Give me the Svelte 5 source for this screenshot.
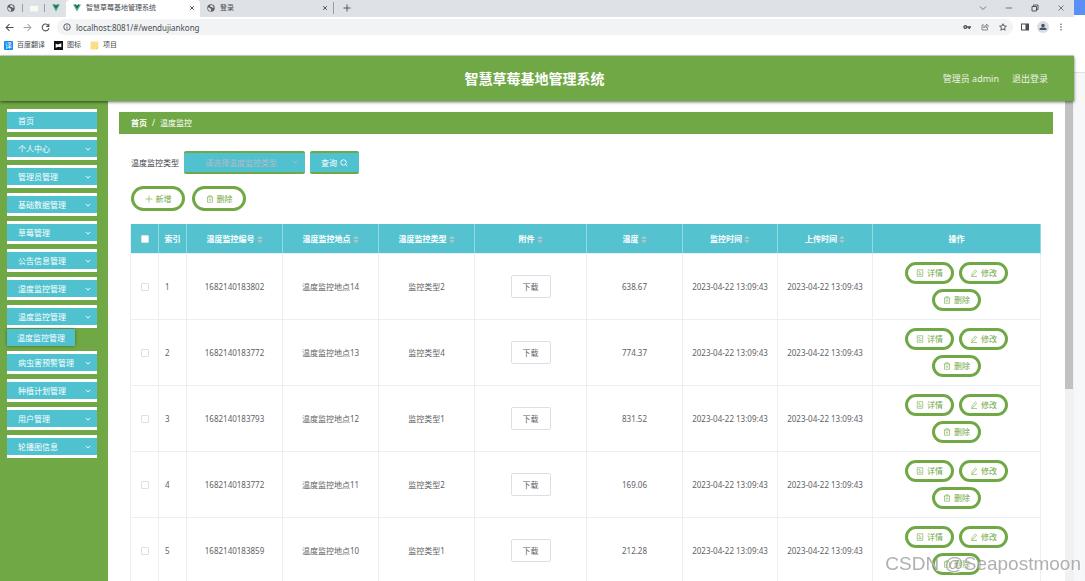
<script lang="ts">
  type Row = { id: string; place: string; type: string; temp: string };

  const menu = [
    { name: "首页", leaf: true },
    { name: "个人中心" },
    { name: "管理员管理" },
    { name: "基础数据管理" },
    { name: "草莓管理" },
    { name: "公告信息管理" },
    { name: "湿度监控管理" },
    { name: "温度监控管理", child: "温度监控管理" },
    { name: "病虫害预警管理" },
    { name: "种植计划管理" },
    { name: "用户管理" },
    { name: "轮播图信息" },
  ];

  const columns = [
    "温度监控编号",
    "温度监控地点",
    "温度监控类型",
    "附件",
    "温度",
    "监控时间",
    "上传时间",
  ];

  const rows: Row[] = [
    { id: "1682140183802", place: "温度监控地点14", type: "监控类型2", temp: "638.67" },
    { id: "1682140183772", place: "温度监控地点13", type: "监控类型4", temp: "774.37" },
    { id: "1682140183793", place: "温度监控地点12", type: "监控类型1", temp: "831.52" },
    { id: "1682140183772", place: "温度监控地点11", type: "监控类型2", temp: "169.06" },
    { id: "1682140183859", place: "温度监控地点10", type: "监控类型1", temp: "212.28" },
  ];
  const time = "2023-04-22 13:09:43";

  let url = $state("localhost:8081/#/wendujiankong");
  let selectedType = $state("");

  // stroked icons, 16x16 grid
  const icons: Record<string, string> = {
    back: "M15 8H2M8 2 2 8l6 6",
    forward: "M1 8h13M8 2l6 6-6 6",
    reload: "M13 4.500A6 6 0 1 0 14 9M14 1.500V6H9.500",
    info: "M8 1.500a6.500 6.500 0 1 0 0 13a6.500 6.500 0 1 0 0-13M8 7v4.500M8 4.300v1.400",
    close: "M3 3l10 10M13 3 3 13",
    plus: "M8 1v14M1 8h14",
    down: "M2 5l6 6 6-6",
    minus: "M1.500 8h13",
    restore: "M2 5h9v9H2zM5 5V2h9v9h-3",
    share: "M6 4H2v10h11v-4M5 10c.5-3.500 3-5 6-5V2l4 4-4 4V7.500C8.500 7.500 6.500 8 5 10z",
    star: "M8 1.500l2 4.500 4.800.4-3.700 3.200 1.200 4.800L8 11.800l-4.300 2.600 1.200-4.800L1.200 6.400 6 6z",
    search: "M7 1.500a5.500 5.500 0 1 0 0 11a5.500 5.500 0 1 0 0-11M11 11l3.500 3.500",
    trash: "M1.500 4h13M5.500 4V1.500h5V4M3 4v10.500h10V4M6.500 7v4.500M9.500 7v4.500",
    detail: "M2.500 1.500h11v13h-11zM5 5h3M5 8h6M5 11h6",
    edit: "M4 9.500 10.500 2l2.800 2.300L7 12l-3.500 1zM2 15h12",
  };
</script>

{#snippet icon(name: string, cls = "")}
  <svg class="icon {cls}" viewBox="0 0 16 16" aria-hidden="true"><path d={icons[name]} /></svg>
{/snippet}

{#snippet globe()}
  <svg class="fav" viewBox="0 0 16 16" aria-hidden="true">
    <circle cx="8" cy="8" r="7.500" fill="#5f6368" />
    <path d="M2 7l4 1 2 2v3l-1 1.500C4 14 1.500 11 2 7zM8 2c3 0 5 2 5.500 5l-2 1-1.500-2H7l-1-2z" fill="#dee1e6" />
  </svg>
{/snippet}

{#snippet vue()}
  <svg class="fav" viewBox="0 0 16 16" aria-hidden="true">
    <path d="M0 1h6l2 3.500L10 1h6L8 15z" fill="#41b883" />
    <path d="M3.200 1H6l2 3.500L10 1h2.800L8 9.500z" fill="#35495e" />
  </svg>
{/snippet}

<div class="desktop">
  <div class="browser">
    <div class="tabs">
      <div class="pinned">{@render globe()}</div>
      <div class="pinned line">
        <svg class="fav" viewBox="0 0 16 16" aria-hidden="true">
          <path d="M0 1h16v14H0z" fill="#f7faf6" /><path d="M0 1h16v2H0z" fill="#bfe0c4" />
        </svg>
      </div>
      <div class="pinned line">{@render vue()}</div>
      <div class="tab active">
        {@render vue()}
        <span>智慧草莓基地管理系统</span>
        <button aria-label="关闭标签">{@render icon("close", "tiny")}</button>
      </div>
      <div class="tab">
        {@render globe()}
        <span>登录</span>
        <button aria-label="关闭标签">{@render icon("close", "tiny")}</button>
      </div>
      <button class="new" aria-label="新标签">{@render icon("plus")}</button>
      <div class="window">
        <button aria-label="搜索标签">{@render icon("down", "thin")}</button>
        <button aria-label="最小化">{@render icon("minus", "thin")}</button>
        <button aria-label="还原">{@render icon("restore")}</button>
        <button aria-label="关闭">{@render icon("close", "thin")}</button>
      </div>
    </div>

    <div class="toolbar">
      <button aria-label="后退">{@render icon("back", "nav")}</button>
      <button class="off" aria-label="前进">{@render icon("forward", "nav")}</button>
      <button aria-label="刷新">{@render icon("reload", "nav")}</button>
      <div class="address">
        {@render icon("info")}
        <input aria-label="地址" bind:value={url} />
        <button aria-label="密码">
          <svg class="fav" viewBox="0 0 16 16" aria-hidden="true">
            <path fill-rule="evenodd" d="M4.500 4a4 4 0 1 0 3.800 5.300H11V12h3V9.300h2V6.700H8.300A4 4 0 0 0 4.500 4zm0 2.500a1.500 1.500 0 1 1 0 3a1.500 1.500 0 0 1 0-3z" fill="#4a4d51" />
          </svg>
        </button>
        <button class="share" aria-label="分享">{@render icon("share")}</button>
        <button aria-label="收藏">{@render icon("star")}</button>
      </div>
      <button aria-label="侧边栏">
        <svg class="fav" viewBox="0 0 16 16" aria-hidden="true">
          <path d="M0 1h16v14H0zM2 3v10h7V3z" fill="#4a4d51" fill-rule="evenodd" />
        </svg>
      </button>
      <button class="avatar" aria-label="用户">
        <svg class="fav" viewBox="0 0 16 16" aria-hidden="true">
          <circle cx="8" cy="5" r="3.500" fill="#46536a" /><path d="M1 14v-2c0-4 14-4 14 0v2z" fill="#46536a" />
        </svg>
      </button>
      <button aria-label="菜单">
        <svg class="fav" viewBox="0 0 16 16" aria-hidden="true">
          <g fill="#4a4d51"><circle cx="8" cy="2.500" r="1.500" /><circle cx="8" cy="8" r="1.500" /><circle cx="8" cy="13.500" r="1.500" /></g>
        </svg>
      </button>
    </div>

    <div class="bookmarks">
      <a href="#fanyi"><i class="yi">译</i>百度翻译</a>
      <a href="#tubiao">
        <svg class="mark" viewBox="0 0 16 16" aria-hidden="true">
          <path d="M0 0h16v16H0z" fill="#111" /><path d="M3 5l4 1 6-2v7l-5-1-5 2z" fill="#fff" />
        </svg>图标
      </a>
      <a href="#xiangmu">
        <svg class="mark" viewBox="0 0 16 16" aria-hidden="true">
          <path d="M1 1h14v11l-3 3H1z" fill="#fbdf85" /><path d="M15 12l-3 3v-3z" fill="#e8c04f" />
        </svg>项目
      </a>
    </div>

    <header>
      <h1>智慧草莓基地管理系统</h1>
      <div class="user">
        <span>管理员 admin</span>
        <a href="#logout">退出登录</a>
      </div>
    </header>

    <div class="page">
      <nav>
        {#each menu as item}
          <a class="item" href="#menu">
            {item.name}
            {#if !item.leaf}{@render icon("down", "tiny")}{/if}
          </a>
          {#if item.child}
            <a class="child" href="#wendujiankong">{item.child}</a>
          {/if}
        {/each}
      </nav>

      <main>
        <div class="crumb">
          <a href="#home">首页</a><span>/</span><span>温度监控</span>
        </div>

        <div class="content">
          <form class="search">
            <label for="type">温度监控类型</label>
            <div class="select">
              <select id="type" bind:value={selectedType}>
                <option value="">请选择温度监控类型</option>
              </select>
              {@render icon("down", "tiny")}
            </div>
            <button type="button">查询 {@render icon("search")}</button>
          </form>

          <div class="actions">
            <button class="pill big">{@render icon("plus")}新增</button>
            <button class="pill big">{@render icon("trash")}删除</button>
          </div>

          <table>
            <colgroup>
              <col class="w-s" /><col class="w-s" />
              <col class="w-m" /><col class="w-m" /><col class="w-m" />
              <col class="w-l" />
              <col class="w-m" /><col class="w-t" /><col class="w-t" />
              <col />
            </colgroup>
            <thead>
              <tr>
                <th><input type="checkbox" aria-label="全选" /></th>
                <th>索引</th>
                {#each columns as col}
                  <th>
                    {col}
                    <svg class="sort" viewBox="0 0 8 10" aria-hidden="true"><path d="M4 0l4 4H0zM0 6h8l-4 4z" /></svg>
                  </th>
                {/each}
                <th>操作</th>
              </tr>
            </thead>
            <tbody>
              {#each rows as row, i}
                <tr>
                  <td><input type="checkbox" aria-label="选择第{i + 1}行" /></td>
                  <td class="index">{i + 1}</td>
                  <td>{row.id}</td>
                  <td>{row.place}</td>
                  <td>{row.type}</td>
                  <td><button class="download">下载</button></td>
                  <td>{row.temp}</td>
                  <td>{time}</td>
                  <td>{time}</td>
                  <td>
                    <div class="ops">
                      <button class="pill">{@render icon("detail")}详情</button>
                      <button class="pill">{@render icon("edit")}修改</button>
                      <button class="pill">{@render icon("trash")}删除</button>
                    </div>
                  </td>
                </tr>
              {/each}
            </tbody>
          </table>
        </div>
      </main>
      <div class="scroll"><div class="thumb"></div></div>
    </div>
  </div>

  <div class="behind"></div>
  <div class="watermark">CSDN @Seapostmoon</div>
</div>

<style>
  :global(body) {
    background: #fff;
    overflow: hidden;
  }

  .desktop {
    display: flex;
    height: 100vh;
    font: 8px/12px "Noto Sans", "Noto Sans CJK SC", sans-serif;
    color: #606266;
  }

  .desktop *,
  .desktop *::before {
    box-sizing: border-box;
  }

  button,
  input,
  select {
    font: inherit;
    color: inherit;
    border: 0;
    padding: 0;
    margin: 0;
    background: none;
  }

  a {
    color: inherit;
    text-decoration: none;
  }

  .icon {
    width: 8px;
    height: 8px;
    flex: none;
    fill: none;
    stroke: currentColor;
    stroke-width: 1.8;
  }

  .tiny {
    width: 6px;
    height: 6px;
    stroke-width: 2.4;
  }

  .thin {
    stroke-width: 1.4;
  }

  .nav {
    width: 9px;
    height: 9px;
  }

  .fav {
    width: 8px;
    height: 8px;
    flex: none;
  }

  .browser {
    flex: 1;
    min-width: 0;
    display: flex;
    flex-direction: column;
  }

  /* Browser window */
  .tabs {
    display: flex;
    flex: none;
    height: 17px;
    padding-bottom: 2px;
    align-items: center;
    background: #dee1e6;
    color: #45494d;
    font-size: 7px;
  }

  .tabs button,
  .toolbar button {
    display: flex;
    align-items: center;
    justify-content: center;
  }

  .pinned {
    display: flex;
    justify-content: center;
    width: 22px;
  }

  .line {
    border-left: 1px solid #9a9da2;
  }

  .tab {
    display: flex;
    align-items: center;
    gap: 5px;
    width: 134px;
    padding: 0 5px 0 7px;
    border-right: 1px solid #9a9da2;
  }

  .tab span {
    flex: 1;
  }

  .tab.active {
    height: 17px;
    margin-bottom: -2px;
    padding-bottom: 2px;
    border: 0;
    border-radius: 4px 4px 0 0;
    background: #fff;
  }

  .new {
    width: 26px;
  }

  .window {
    display: flex;
    margin-left: auto;
  }

  .window button {
    width: 26px;
  }

  .toolbar {
    display: flex;
    flex: none;
    align-items: center;
    height: 20px;
    background: #fff;
    color: #4a4d51;
  }

  .toolbar button {
    width: 18px;
  }

  .toolbar .off {
    color: #a0a3a6;
  }

  .toolbar .share {
    color: #7b7e82;
  }

  .address {
    display: flex;
    flex: 1;
    align-items: center;
    height: 16px;
    margin: 0 3px;
    padding: 0 1px 0 6px;
    border-radius: 8px;
    background: #f1f3f4;
  }

  .address input {
    flex: 1;
    height: 14px;
    margin-left: 5px;
  }

  .avatar::before {
    content: "";
    position: absolute;
    z-index: 0;
    width: 12px;
    height: 12px;
    border-radius: 50%;
    background: #dadde3;
  }

  .avatar svg {
    position: relative;
  }

  .toolbar > button:last-child {
    margin-right: 4px;
  }

  .bookmarks {
    display: flex;
    flex: none;
    gap: 9px;
    height: 19px;
    padding: 0 4px 2px;
    align-items: center;
    background: #fff;
    border-bottom: 1px solid #d5dad2;
    color: #45494d;
    font-size: 7px;
  }

  .bookmarks a {
    display: flex;
    align-items: center;
    gap: 4px;
  }

  .yi {
    width: 9px;
    height: 9px;
    border-radius: 1px;
    background: #118bee;
    color: #fff;
    font-style: normal;
    line-height: 9px;
    text-align: center;
  }

  .mark {
    width: 9px;
    height: 9px;
  }

  /* Page header */
  header {
    display: grid;
    grid-template-columns: 1fr auto 1fr;
    flex: none;
    align-items: center;
    height: 45px;
    padding-right: 5px;
    z-index: 1;
    background: #70a846;
    box-shadow: 0 1px 3px rgba(0, 0, 0, 0.6);
    color: #fff;
  }

  h1 {
    grid-column: 2;
    margin: 0;
    font-size: 14px;
    line-height: 20px;
  }

  .user {
    display: flex;
    justify-content: flex-end;
    gap: 13px;
    padding-right: 21px;
    color: #edf4e7;
    font-size: 9px;
  }

  .page {
    display: flex;
    flex: 1;
    min-height: 0;
    overflow: hidden;
  }

  /* Side menu */
  nav {
    flex: none;
    width: 108px;
    padding: 8px 11px 0 7px;
    background: #70a846;
    color: #fff;
  }

  .item {
    display: flex;
    align-items: center;
    justify-content: space-between;
    height: 23px;
    margin-bottom: 5px;
    padding: 0 6px 0 11px;
    border: solid #fff;
    border-width: 3px 0;
    background: #4fc1cf;
  }

  .child {
    display: block;
    width: 68px;
    height: 17px;
    margin: -4px 0 5px;
    padding-left: 10px;
    background: #4fc1cf;
    box-shadow: 0 0 3px rgba(0, 0, 0, 0.4);
    line-height: 17px;
  }

  main {
    flex: 1;
    min-width: 0;
    padding: 11px 12px 0 11px;
    background: #fff;
  }

  .crumb {
    display: flex;
    gap: 5px;
    height: 22px;
    padding: 0 12px;
    align-items: center;
    background: #70a846;
    color: #fff;
  }

  .crumb a {
    font-weight: bold;
  }

  .content {
    padding: 17px 12px 0;
  }

  .search {
    display: flex;
    align-items: center;
    gap: 5px;
    color: #404347;
  }

  .search button,
  select {
    height: 23px;
    border: solid #70a846;
    border-width: 2px 0;
    border-radius: 2px;
    background: #4fc1cf;
  }

  .search button {
    display: flex;
    align-items: center;
    justify-content: center;
    gap: 3px;
    width: 49px;
    color: #fff;
  }

  .select {
    display: flex;
    position: relative;
  }

  select {
    appearance: none;
    width: 121px;
    padding-left: 21px;
    color: #b4bdc4;
  }

  .select .icon {
    position: absolute;
    top: 8px;
    right: 7px;
    color: #b4bdc4;
  }

  .actions {
    display: flex;
    gap: 7px;
    margin: 12px 0 13px;
  }

  .pill {
    display: flex;
    align-items: center;
    justify-content: center;
    gap: 3px;
    width: 49px;
    height: 22px;
    border: 3px solid #70a846;
    border-radius: 13px;
    background: #fff;
    color: #70a846;
  }

  .pill .icon {
    stroke-width: 1.2;
  }

  .pill.big {
    width: 54px;
    height: 25px;
  }

  /* Data table */
  table {
    width: 100%;
    table-layout: fixed;
    border-spacing: 0;
    box-shadow: -1px 0 0 #ebeef5;
  }

  .w-s {
    width: 28px;
  }

  .w-m {
    width: 96px;
  }

  .w-t {
    width: 95px;
  }

  .w-l {
    width: 112px;
  }

  th,
  td {
    padding: 0;
    border: solid #ebeef5;
    border-width: 0 1px 1px 0;
    text-align: center;
    white-space: nowrap;
  }

  th {
    height: 30px;
    background: #55c3cf;
    border-right-color: #93d9e0;
    color: #fff;
  }

  td {
    height: 66px;
  }

  .index {
    padding-left: 6px;
    text-align: left;
  }

  table input {
    appearance: none;
    display: block;
    width: 8px;
    height: 8px;
    margin: 0 auto;
    border: 1px solid #dcdfe6;
    border-radius: 1px;
    background: #fff;
  }

  .sort {
    width: 6px;
    height: 7px;
    fill: #c0c4cc;
    vertical-align: middle;
  }

  .download {
    width: 40px;
    height: 23px;
    border: 1px solid #dcdfe6;
    border-radius: 2px;
    background: #fff;
  }

  .ops {
    display: flex;
    flex-wrap: wrap;
    justify-content: center;
    gap: 5px;
    padding: 0 30px;
  }

  .scroll {
    flex: none;
    width: 9px;
    background: #f1f1f1;
  }

  .thumb {
    height: 60%;
    margin-right: 1px;
    background: #c1c1c1;
  }

  /* Window lying behind the browser */
  .behind {
    flex: none;
    width: 11px;
    border-top: 15px solid #5a8ff5;
    background: linear-gradient(#fff 57px, #dfe1e5 57px, #dfe1e5 58px, #f6f7f9 58px);
  }

  .watermark {
    position: fixed;
    right: 4px;
    bottom: 4px;
    z-index: 2;
    font: 19px/26px "Liberation Sans", Arial, sans-serif;
    color: rgba(150, 150, 150, 0.75);
    text-shadow: 1px 1px 0 rgba(255, 255, 255, 0.7);
  }
</style>
